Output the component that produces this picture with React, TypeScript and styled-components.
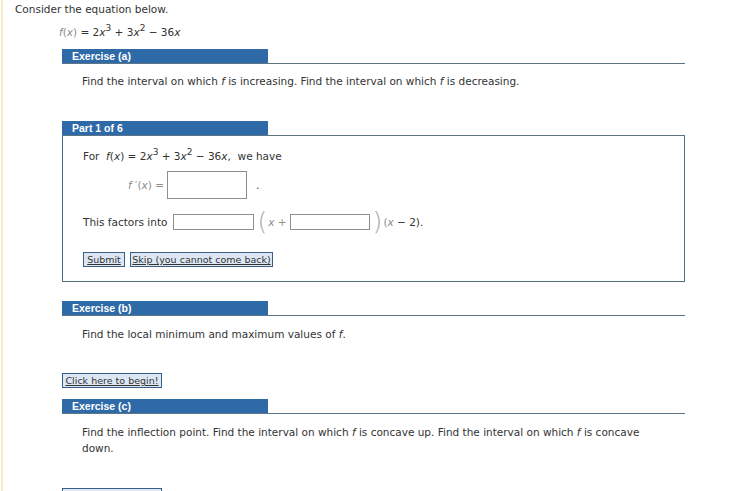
import React from "react";
import styled, { createGlobalStyle } from "styled-components";

const GlobalStyle = createGlobalStyle`
  html, body {
    margin: 0;
    padding: 0;
    background: #ffffff;
  }
  body {
    font-family: "DejaVu Sans", Verdana, sans-serif;
    font-size: 10.5px;
    color: #333333;
  }
`;

const Page = styled.div`
  min-height: 491px;
  margin-left: 1px;
  border-left: 2px solid #f3ecc8;
  padding: 3px 0 0 12px;
  box-sizing: border-box;
`;

const Intro = styled.div`
  line-height: 13px;
`;

const Equation = styled.div`
  line-height: 13px;
  margin: 10px 0 0 44px;
`;

const Section = styled.div<{ $top: number }>`
  width: 623px;
  margin: ${(p) => p.$top}px 0 0 47px;
`;

const HeaderRow = styled.div`
  display: flex;
  border-bottom: 1px solid #5b7585;
`;

const HeaderTab = styled.div`
  width: 196px;
  height: 14px;
  line-height: 14px;
  padding-left: 10px;
  background: #2f6aa8;
  color: #ffffff;
  font-family: "Liberation Sans", Arial, sans-serif;
  font-weight: bold;
  font-size: 10.5px;
`;

const Prompt = styled.div<{ $top?: number }>`
  margin: ${(p) => p.$top ?? 10}px 0 0 20px;
  line-height: 16px;
  width: 570px;
`;

const PartBox = styled.div`
  border: 1px solid #4f6f7e;
  border-top: none;
  height: 146px;
  padding: 14px 0 0 20px;
  box-sizing: border-box;
`;

const Line = styled.div`
  display: flex;
  align-items: center;
  line-height: 13px;
  white-space: pre;
`;

const DerivRow = styled(Line)`
  margin: 8px 0 0 45px;
`;

const FactorRow = styled(Line)`
  margin: 13px 0 0 0;
`;

const Field = styled.div<{ $w: number; $h: number; $gap?: number }>`
  width: ${(p) => p.$w}px;
  height: ${(p) => p.$h}px;
  margin-left: ${(p) => p.$gap ?? 3}px;
  border: 1px solid #8a8f94;
  box-sizing: border-box;
  background: #ffffff;
`;

const Paren = styled.span`
  font-size: 25px;
  font-weight: 200;
  color: #a8a8a8;
  line-height: 20px;
  margin: 0 1px 0 3px;
`;

const Dim = styled.span`
  color: #8c8c8c;
`;

const Dot = styled.span`
  margin-left: 9px;
`;

const ButtonRow = styled.div`
  display: flex;
  gap: 5px;
  margin-top: 20px;
`;

const Btn = styled.button<{ $w: number }>`
  width: ${(p) => p.$w}px;
  height: 15px;
  padding: 0;
  border: 1px solid #3a5f86;
  background: #dce7f3;
  color: #333333;
  font-family: "DejaVu Sans", Verdana, sans-serif;
  font-size: 9.5px;
  text-decoration: underline;
  line-height: 13px;
  cursor: pointer;
`;

const BeginBtn = styled(Btn)<{ $top: number }>`
  display: block;
  margin: ${(p) => p.$top}px 0 0 47px;
`;

const I = styled.i`
  font-style: italic;
`;

const Sup = styled.sup`
  font-size: 9px;
  vertical-align: 5px;
  line-height: 0;
`;

const Polynomial = () => (
  <span>
    = 2<I>x</I>
    <Sup>3</Sup> + 3<I>x</I>
    <Sup>2</Sup> − 36<I>x</I>
  </span>
);

export default function App() {
  return (
    <Page>
      <GlobalStyle />
      <Intro>Consider the equation below.</Intro>
      <Equation>
        <Dim>
          <I>f</I>(<I>x</I>)
        </Dim>{" "}
        <Polynomial />
      </Equation>

      <Section $top={10}>
        <HeaderRow>
          <HeaderTab>Exercise (a)</HeaderTab>
        </HeaderRow>
        <Prompt $top={9}>
          Find the interval on which <I>f</I> is increasing. Find the interval on which <I>f</I> is
          decreasing.
        </Prompt>
      </Section>

      <Section $top={32}>
        <HeaderRow>
          <HeaderTab>Part 1 of 6</HeaderTab>
        </HeaderRow>
        <PartBox>
          <Line>
            <span>For  </span>
            <span>
              <I>f</I>(<I>x</I>){" "}
            </span>
            <Polynomial />
            <span>,  we have</span>
          </Line>
          <DerivRow>
            <Dim>
              <I>f</I> ′(<I>x</I>) =
            </Dim>
            <Field $w={80} $h={28} />
            <Dot>.</Dot>
          </DerivRow>
          <FactorRow>
            <span>This factors into</span>
            <Field $w={81} $h={16} $gap={6} />
            <Paren>(</Paren>
            <Dim>
              <I>x</I> +
            </Dim>
            <Field $w={80} $h={16} />
            <Paren>)</Paren>
            <span>
              <Dim>
                (<I>x</I>
              </Dim>{" "}
              − 2).
            </span>
          </FactorRow>
          <ButtonRow>
            <Btn $w={42}>Submit</Btn>
            <Btn $w={143}>Skip (you cannot come back)</Btn>
          </ButtonRow>
        </PartBox>
      </Section>

      <Section $top={19}>
        <HeaderRow>
          <HeaderTab>Exercise (b)</HeaderTab>
        </HeaderRow>
        <Prompt>
          Find the local minimum and maximum values of <I>f</I>.
        </Prompt>
      </Section>

      <BeginBtn $w={100} $top={31}>
        Click here to begin!
      </BeginBtn>

      <Section $top={11}>
        <HeaderRow>
          <HeaderTab>Exercise (c)</HeaderTab>
        </HeaderRow>
        <Prompt>
          Find the inflection point. Find the interval on which <I>f</I> is concave up. Find the
          interval on which <I>f</I> is concave down.
        </Prompt>
      </Section>

      <BeginBtn $w={100} $top={32}>
        Click here to begin!
      </BeginBtn>
    </Page>
  );
}
